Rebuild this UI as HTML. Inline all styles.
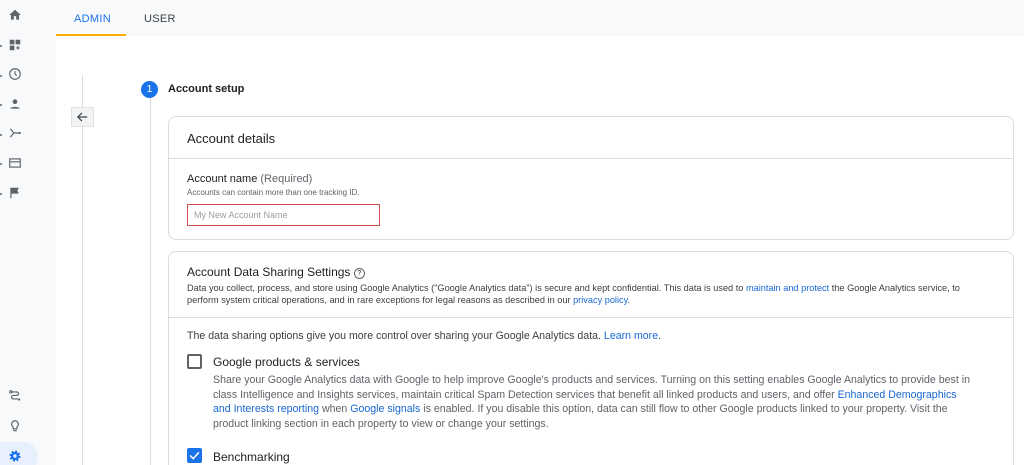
<!DOCTYPE html>
<html style="width:1024px;height:465px;overflow:hidden"><head><style>
*{box-sizing:border-box;margin:0;padding:0}
body{width:1024px;height:465px;overflow:hidden;background:#fff;font-family:"Liberation Sans",Arial,sans-serif;color:#202124;position:relative}
.side{position:absolute;left:0;top:0;width:56px;height:465px;background:#f8f9fa}
.top{position:absolute;left:56px;top:0;right:0;height:36px;background:#f8f9fa}
.tab{position:absolute;top:13px;font-size:11px;letter-spacing:.3px}
.ab{position:absolute}
.card{position:absolute;left:168px;width:846px;border:1px solid #dadce0;border-radius:8px;background:#fff}
a{color:#1967d2;text-decoration:none}
.ic{position:absolute;left:8px;width:14px;height:14px}
.dot{position:absolute;left:0;width:2px;height:2px;background:#5f6368;border-radius:1px}
</style></head><body>
<div class="side">
<svg class="ic" style="top:8px" viewBox="0 0 24 24"><path d="M10 20v-6h4v6h5v-8h3L12 3 2 12h3v8z" fill="#5f6368"/></svg>
<svg class="ic" style="top:38px" viewBox="0 0 24 24"><path d="M3 3h8v8H3zM13 3h8v8h-8zM3 13h8v8H3z" fill="#5f6368"/><path d="M17 14v6M14 17h6" stroke="#5f6368" stroke-width="2"/></svg>
<svg class="ic" style="top:67px" viewBox="0 0 24 24"><circle cx="12" cy="12" r="9" fill="none" stroke="#5f6368" stroke-width="2"/><path d="M12 7v5l3 3" fill="none" stroke="#5f6368" stroke-width="2"/></svg>
<svg class="ic" style="top:97px" viewBox="0 0 24 24"><circle cx="12" cy="8" r="4" fill="#5f6368"/><path d="M4 20c0-4 16-4 16 0z" fill="#5f6368"/></svg>
<svg class="ic" style="top:126px" viewBox="0 0 24 24"><path d="M4 5l6 7-6 7M10 12h10" fill="none" stroke="#5f6368" stroke-width="2"/><circle cx="20" cy="12" r="2" fill="#5f6368"/></svg>
<svg class="ic" style="top:156px" viewBox="0 0 24 24"><rect x="3" y="5" width="18" height="14" fill="none" stroke="#5f6368" stroke-width="2"/><path d="M3 10h18" stroke="#5f6368" stroke-width="2"/></svg>
<svg class="ic" style="top:186px" viewBox="0 0 24 24"><path d="M5 3v18M5 4h12l-2 4 2 4H5" fill="#5f6368" stroke="#5f6368" stroke-width="2"/></svg>
<div class="dot" style="top:45px"></div><div class="dot" style="top:75px"></div><div class="dot" style="top:104px"></div><div class="dot" style="top:134px"></div><div class="dot" style="top:163px"></div><div class="dot" style="top:193px"></div>
<svg class="ic" style="top:389px" viewBox="0 0 24 24"><circle cx="5" cy="5" r="2" fill="none" stroke="#5f6368" stroke-width="2"/><path d="M7 5h8a3 3 0 010 6H9a3 3 0 000 6h8" fill="none" stroke="#5f6368" stroke-width="2"/><circle cx="19" cy="18" r="2" fill="#5f6368"/></svg>
<svg class="ic" style="top:419px" viewBox="0 0 24 24"><path d="M12 3a6 6 0 00-3 11v3h6v-3a6 6 0 00-3-11zM9 20h6" fill="none" stroke="#5f6368" stroke-width="2"/></svg>
<div class="ab" style="left:0;top:442px;width:38px;height:30px;background:#e8f0fe;border-radius:0 15px 15px 0"></div>
<svg class="ic" style="top:449px" viewBox="0 0 24 24"><circle cx="12" cy="12" r="7" fill="#1a73e8" stroke="#1a73e8" stroke-width="5" stroke-dasharray="3 2.5"/><circle cx="12" cy="12" r="3" fill="#e8f0fe"/></svg>
</div>
<div class="top">
<div class="tab" style="left:18px;color:#1a73e8">ADMIN</div>
<div class="tab" style="left:88px;color:#3c4043">USER</div>
<div class="ab" style="left:0;top:34px;width:70px;height:2px;background:#f9ab00"></div>
</div>
<div class="ab" style="left:82px;top:75px;width:1px;height:390px;background:#dadce0"></div>
<div class="ab" style="left:71px;top:107px;width:23px;height:20px;background:#f1f3f4;border:1px solid #e0e0e0"></div>
<svg class="ab" style="left:75px;top:110px" width="15" height="14" viewBox="0 0 24 24"><path d="M20 12H5M11 5l-7 7 7 7" fill="none" stroke="#3c4043" stroke-width="2"/></svg>
<div class="ab" style="left:150px;top:97px;width:1px;height:370px;background:#dadce0"></div>
<div class="ab" style="left:141px;top:81px;width:17px;height:17px;border-radius:50%;background:#1a73e8;color:#fff;font-size:10px;text-align:center;line-height:17px">1</div>
<div class="ab" style="left:168px;top:83px;font-size:11px;font-weight:bold;color:#202124">Account setup</div>
<div class="card" style="top:116px;height:124px">
<div style="height:42px;border-bottom:1px solid #dadce0;padding:14px 0 0 18px;font-size:13px">Account details</div>
<div style="padding:14px 0 0 18px;font-size:11px">Account name <span style="color:#5f6368">(Required)</span></div>
<div style="padding:3px 0 0 18px;font-size:8px;color:#5f6368">Accounts can contain more than one tracking ID.</div>
<div style="margin:7px 0 0 18px;width:193px;height:22px;border:1px solid #c5221f;opacity:.8;font-size:9px;color:#80868b;padding:5px 6px">My New Account Name</div>
</div>
<div class="card" style="top:251px;height:230px">
<div style="height:66px;border-bottom:1px solid #dadce0;padding:13px 0 0 18px">
<div style="font-size:12px">Account Data Sharing Settings <span style="display:inline-block;width:11px;height:11px;border:1px solid #5f6368;border-radius:50%;font-size:7px;text-align:center;line-height:9px;vertical-align:1px">?</span></div>
<div style="font-size:9.2px;color:#3c4043;line-height:12px;margin-top:3px;width:790px">Data you collect, process, and store using Google Analytics ("Google Analytics data") is secure and kept confidential. This data is used to <a>maintain and protect</a> the Google Analytics service, to<br>perform system critical operations, and in rare exceptions for legal reasons as described in our <a>privacy policy</a>.</div>
</div>
<div style="padding:12px 0 0 18px;font-size:10.6px;color:#3c4043">The data sharing options give you more control over sharing your Google Analytics data. <a>Learn more</a>.</div>
<div class="ab" style="left:18px;top:102px;width:15px;height:15px;border:2px solid #5f6368;border-radius:2px"></div>
<div class="ab" style="left:44px;top:103px;font-size:12px">Google products &amp; services</div>
<div class="ab" style="left:44px;top:121px;width:790px;font-size:10.6px;color:#5f6368;line-height:14.7px">Share your Google Analytics data with Google to help improve Google's products and services. Turning on this setting enables Google Analytics to provide best in<br>class Intelligence and Insights services, maintain critical Spam Detection services that benefit all linked products and users, and offer <a>Enhanced Demographics<br>and Interests reporting</a> when <a>Google signals</a> is enabled. If you disable this option, data can still flow to other Google products linked to your property. Visit the<br>product linking section in each property to view or change your settings.</div>
<div class="ab" style="left:18px;top:196px;width:15px;height:15px;background:#1a73e8;border-radius:2px"><svg width="15" height="15" viewBox="0 0 24 24"><path d="M5 12l5 5 9-10" fill="none" stroke="#fff" stroke-width="2.5"/></svg></div>
<div class="ab" style="left:44px;top:198px;font-size:12px">Benchmarking</div>
</div>
</body></html>
